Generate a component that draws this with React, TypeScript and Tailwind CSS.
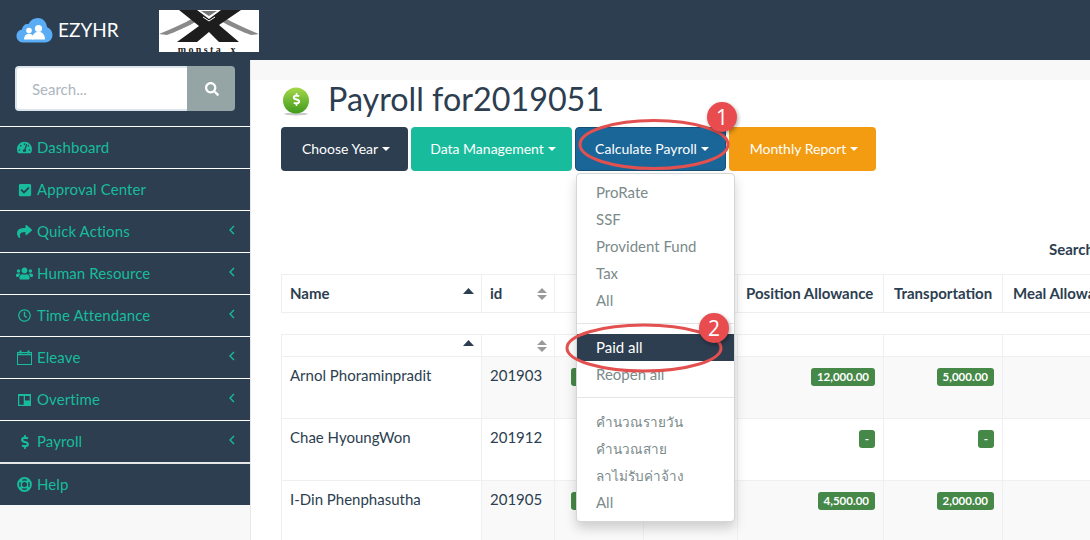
import type { ReactNode } from "react";
import {
  FaCheckSquare,
  FaDollarSign,
  FaRegClock,
  FaSearch,
  FaShare,
  FaTachometerAlt,
  FaUsers,
} from "react-icons/fa";

function OvertimeIcon() {
  return (
    <svg width="13" height="12" viewBox="0 0 13 12" fill="currentColor">
      <path d="M0 0h13v12H0zM1.3 2v8.7h4.4V2zM7 2v4.4h4.7V2z" fillRule="evenodd" />
    </svg>
  );
}

function CalendarIcon() {
  return (
    <svg width="15" height="15" viewBox="0 0 15 15" fill="none" stroke="currentColor">
      <rect x="0.5" y="2.5" width="14" height="12" />
      <path d="M0.5 4.5h14" strokeWidth="1.5" />
      <path d="M3.5 0.5v3M11.5 0.5v3" strokeWidth="2" />
    </svg>
  );
}

function RingIcon() {
  return (
    <svg width="15" height="15" viewBox="0 0 15 15" fill="none" stroke="currentColor">
      <circle cx="7.5" cy="7.5" r="6.4" strokeWidth="2" />
      <circle cx="7.5" cy="7.5" r="3.2" strokeWidth="1.4" />
      <path d="M3 3l2.4 2.4M12 3L9.6 5.4M3 12l2.4-2.4M12 12L9.6 9.6" strokeWidth="2.6" />
    </svg>
  );
}

function Chevron() {
  return (
    <svg width="6" height="10" viewBox="0 0 6 10" fill="none" stroke="currentColor" strokeWidth="1.4">
      <path d="M5 1L1 5l4 4" />
    </svg>
  );
}

const menu: { label: string; icon: ReactNode; arrow?: boolean }[] = [
  { label: "Dashboard", icon: <FaTachometerAlt size={15} /> },
  { label: "Approval Center", icon: <FaCheckSquare size={14} /> },
  { label: "Quick Actions", icon: <FaShare size={15} />, arrow: true },
  { label: "Human Resource", icon: <FaUsers size={17} />, arrow: true },
  { label: "Time Attendance", icon: <FaRegClock size={13} />, arrow: true },
  { label: "Eleave", icon: <CalendarIcon />, arrow: true },
  { label: "Overtime", icon: <OvertimeIcon />, arrow: true },
  { label: "Payroll", icon: <FaDollarSign size={14} />, arrow: true },
];

function CloudLogo() {
  return (
    <svg width="37" height="26" viewBox="0 0 37 26">
      <path
        d="M7 25.5C3 25.5 0.5 22.5 0.5 19C0.5 15.5 3 13 6 12.6C6.5 8.5 9.5 6.5 12.5 7C14.5 3 18 0.8 22 1C27 1.2 30.5 5 31 10C34.5 11.5 36.5 14.5 36.5 18C36.5 22.5 33 25.5 29 25.5Z"
        fill="#5aacf5"
      />
      <circle cx="13" cy="13.5" r="2.8" fill="#fff" />
      <path d="M8 22.5c0-3.5 2-5.8 5-5.8s4 1.5 4 3v2.8z" fill="#fff" />
      <circle cx="22.5" cy="11.5" r="3.6" fill="#fff" />
      <path d="M16 22.5c0-5 2.8-7.8 6.5-7.8s6.5 2.8 6.5 7.8z" fill="#fff" />
    </svg>
  );
}

function BrandImage() {
  return (
    <div className="relative ml-[40px] mt-[10px] h-[42px] w-[100px] overflow-hidden bg-white">
      <svg width="100" height="34" viewBox="0 0 100 34" className="absolute left-0 top-0">
        <path d="M0 24C12 19 24 14 36 7L40 10C28 17 16 22 8 25Z" fill="#8a8a8a" />
        <path d="M100 24C88 19 76 14 64 7L60 10C72 17 84 22 92 25Z" fill="#8a8a8a" />
        <path d="M20 0H38L50 9L62 0H82L60 15L80 32H60L50 22L38 32H18L40 16Z" fill="#1d1d1d" />
        <path d="M42 1H58L50 6Z" fill="#777" />
        <path d="M44 7L50 11L56 7" stroke="#fff" fill="none" />
      </svg>
      <span className="absolute left-[19px] top-[34px] whitespace-nowrap font-['Liberation_Serif',serif] text-[10px] font-bold leading-[12px] tracking-[2.4px] text-[#222]">
        monsta_x
      </span>
    </div>
  );
}

function SortBoth() {
  return (
    <svg width="10" height="12" viewBox="0 0 10 12" fill="#9a9a9a" className="mr-[-1px]">
      <path d="M5 0l5 5H0zM5 12L0 7h10z" />
    </svg>
  );
}

function SortUp() {
  return (
    <svg width="11" height="6" viewBox="0 0 11 6" fill="#2c3e50" className="mr-[-1px]">
      <path d="M5.5 0L11 6H0z" />
    </svg>
  );
}

function Badge({ children }: { children: ReactNode }) {
  return (
    <span className="inline-block h-[18px] rounded-[3px] bg-[#468847] px-[6px] align-top text-[11.5px] font-bold leading-[18px] text-white">
      {children}
    </span>
  );
}

function Columns() {
  return (
    <colgroup>
      <col className="w-[200px]" />
      <col className="w-[73px]" />
      <col className="w-[89px]" />
      <col className="w-[94px]" />
      <col className="w-[146px]" />
      <col className="w-[119px]" />
      <col className="w-[160px]" />
    </colgroup>
  );
}

const rows = [
  { name: "Arnol Phoraminpradit", id: "201903", hasBadge: true, position: "12,000.00", transport: "5,000.00", striped: true },
  { name: "Chae HyoungWon", id: "201912", hasBadge: false, position: "-", transport: "-", striped: false },
  { name: "I-Din Phenphasutha", id: "201905", hasBadge: true, position: "4,500.00", transport: "2,000.00", striped: true },
];

const headCell = "border border-[#ecf0f1] px-[8px] text-left font-bold";

function PayrollTable() {
  return (
    <div className="w-[881px]">
      <table className="w-[881px] table-fixed border-collapse text-[15px] text-[#2c3e50]">
        <Columns />
        <thead>
          <tr className="h-[38px]">
            <th className={headCell}>
              <div className="flex items-center justify-between">
                Name
                <span className="mb-[5px]">
                  <SortUp />
                </span>
              </div>
            </th>
            <th className={headCell}>
              <div className="flex items-center justify-between">
                id
                <SortBoth />
              </div>
            </th>
            <th className={headCell} />
            <th className={headCell} />
            <th className={`${headCell} whitespace-nowrap`}>Position Allowance</th>
            <th className={`${headCell} whitespace-nowrap pl-[10px]`}>Transportation</th>
            <th className={`${headCell} whitespace-nowrap pl-[10px]`}>Meal Allowance</th>
          </tr>
        </thead>
      </table>
      <table className="mt-[21px] w-[881px] table-fixed border-collapse text-[15px] text-[#2c3e50]">
        <Columns />
        <tbody>
          <tr className="h-[22px]">
            <td className="border border-[#ecf0f1] px-[8px]">
              <div className="flex justify-end">
                <span className="mb-[5px]">
                  <SortUp />
                </span>
              </div>
            </td>
            <td className="border border-[#ecf0f1] px-[8px]">
              <div className="flex justify-end">
                <SortBoth />
              </div>
            </td>
            <td className="border border-[#ecf0f1]" />
            <td className="border border-[#ecf0f1]" />
            <td className="border border-[#ecf0f1]" />
            <td className="border border-[#ecf0f1]" />
            <td className="border border-[#ecf0f1]" />
          </tr>
          {rows.map((row) => {
            const bg = row.striped ? "bg-[#f9f9f9]" : "bg-white";
            const cell = `border border-[#ecf0f1] px-[8px] pt-[11px] align-top ${bg}`;
            return (
              <tr key={row.id} className="h-[62px]">
                <td className="border border-[#ecf0f1] bg-white px-[8px] pt-[8px] align-top leading-[21px]">{row.name}</td>
                <td className={`border border-[#ecf0f1] px-[8px] pt-[8px] align-top leading-[21px] ${bg}`}>{row.id}</td>
                <td className={`${cell} pl-[16px]`}>
                  {row.hasBadge ? <span className="block h-[18px] w-[40px] rounded-[3px] bg-[#468847]" /> : null}
                </td>
                <td className={cell} />
                <td className={`${cell} text-right`}>
                  <Badge>{row.position}</Badge>
                </td>
                <td className={`${cell} text-right`}>
                  <Badge>{row.transport}</Badge>
                </td>
                <td className={cell} />
              </tr>
            );
          })}
        </tbody>
      </table>
    </div>
  );
}

function Caret() {
  return <span className="ml-[4px] inline-block h-0 w-0 border-x-[4px] border-t-[4px] border-x-transparent border-t-current align-middle" />;
}

const btn = "flex h-[44px] items-center justify-center rounded-[4px] pb-[1px] pl-[3px] text-[14px] text-white";

function PayrollMenu() {
  const item = "h-[27px] whitespace-nowrap px-[19px] text-[15px] leading-[27px] text-[#7b8a8b]";
  const thai = "h-[27px] whitespace-nowrap px-[19px] pt-[1px] text-[13.5px] leading-[27px] text-[#7b8a8b]";
  return (
    <div className="absolute left-[325px] top-[113px] z-10 w-[159px] rounded-[4px] border border-[#d5d5d5] bg-white py-[5px] shadow-[0_6px_12px_rgba(0,0,0,0.175)]">
      <div className={item}>ProRate</div>
      <div className={item}>SSF</div>
      <div className={item}>Provident Fund</div>
      <div className={item}>Tax</div>
      <div className={item}>All</div>
      <div className="mb-[10px] mt-[9px] h-px bg-[#e5e5e5]" />
      <div className="h-[27px] bg-[#2c3e50] px-[19px] text-[15px] leading-[27px] text-white">Paid all</div>
      <div className={item}>Reopen all</div>
      <div className="mb-[10px] mt-[9px] h-px bg-[#e5e5e5]" />
      <div className={thai}>คำนวณรายวัน</div>
      <div className={thai}>คำนวณสาย</div>
      <div className={thai}>ลาไม่รับค่าจ้าง</div>
      <div className={item}>All</div>
    </div>
  );
}

function Annotation({ n, className }: { n: number; className: string }) {
  return (
    <div
      className={`absolute z-30 flex h-[30px] w-[30px] items-center justify-center rounded-full bg-[#e84c4f] font-['Open_Sans',sans-serif] text-[21px] leading-none text-white shadow-[1px_2px_4px_rgba(0,0,0,0.35)] ${className}`}
    >
      {n}
    </div>
  );
}

export default function App() {
  return (
    <div className="relative h-[540px] w-[1090px] overflow-hidden bg-[#f8f8f8] font-[Lato,'Noto_Sans',sans-serif] text-[#2c3e50]">
      <header className="flex h-[60px] bg-[#2c3e50]">
        <div className="ml-[16px] mt-[17px]">
          <CloudLogo />
        </div>
        <div className="ml-[5px] mt-[17px] text-[19px] leading-[26px] text-white">EZYHR</div>
        <BrandImage />
      </header>

      <div className="flex">
        <aside className="w-[250px] shrink-0">
          <div className="h-[67px] border-b border-white bg-[#2c3e50] px-[15px] pt-[6px]">
            <div className="flex h-[45px] w-[220px]">
              <div className="flex flex-1 items-center rounded-l-[4px] border-2 border-r-0 border-[#dce4ec] bg-white pl-[15px] pt-[2px] text-[15px] text-[#acb6c0]">
                Search...
              </div>
              <div className="flex w-[48px] items-center justify-center rounded-r-[4px] bg-[#95a5a6] pl-[1px] text-white">
                <FaSearch size={14} />
              </div>
            </div>
          </div>
          {menu.map((m, i) => (
            <div
              key={m.label}
              className={`flex items-center bg-[#2c3e50] pl-[16px] pr-[15px] text-[15px] tracking-[0.1px] text-[#18bc9c] ${
                i === menu.length - 1 ? "h-[43px] border-b-2 border-[#e7e7e7]" : "h-[42px] border-b border-white"
              }`}
            >
              <span className="flex w-[17px] justify-center">{m.icon}</span>
              <span className="ml-[4px] flex-1">{m.label}</span>
              {m.arrow ? (
                <span className="mb-[4px]">
                  <Chevron />
                </span>
              ) : null}
            </div>
          ))}
          <div className="flex h-[41px] items-center bg-[#2c3e50] pl-[16px] text-[15px] tracking-[0.1px] text-[#18bc9c]">
            <span className="flex w-[17px] justify-center">
              <RingIcon />
            </span>
            <span className="ml-[4px]">Help</span>
          </div>
        </aside>

        <main className="relative h-[480px] flex-1 overflow-hidden border-l border-[#e7e7e7] bg-white">
          <div className="h-[20px] bg-[#f8f8f8]" />
          <div className="pl-[30px]">
            <div className="flex h-[47px] items-center pb-[6px]">
              <svg width="30" height="30" viewBox="0 0 30 30">
                <defs>
                  <linearGradient id="coin" x1="0" y1="0" x2="0" y2="1">
                    <stop offset="0" stopColor="#a5d84a" />
                    <stop offset="1" stopColor="#3f9a1c" />
                  </linearGradient>
                </defs>
                <ellipse cx="15" cy="28" rx="12" ry="1.5" fill="#c9c9c9" />
                <circle cx="15" cy="14.5" r="13" fill="url(#coin)" />
                <FaDollarSign x="9" y="7" size={13} color="#fff" />
              </svg>
              <h1 className="mb-[2px] ml-[17px] text-[32.3px] font-normal leading-none tracking-normal">Payroll for2019051</h1>
            </div>
            <div className="flex gap-[3px]">
              <div className={`${btn} w-[127px] bg-[#2c3e50]`}>
                Choose Year
                <Caret />
              </div>
              <div className={`${btn} w-[161px] bg-[#18bc9c]`}>
                Data Management
                <Caret />
              </div>
              <div className={`${btn} w-[151px] border border-[#164f75] bg-[#1b6698]`}>
                Calculate Payroll
                <Caret />
              </div>
              <div className={`${btn} w-[147px] bg-[#f39c12]`}>
                Monthly Report
                <Caret />
              </div>
            </div>
            <div className="mt-[68px] h-[35px] whitespace-nowrap pl-[768px] text-[15px] font-bold leading-[20px]">Search:</div>
            <PayrollTable />
          </div>
          <PayrollMenu />
        </main>
      </div>

      <svg width="1090" height="540" className="pointer-events-none absolute left-0 top-0 z-20">
        <ellipse cx="654" cy="144.5" rx="74" ry="24" fill="none" stroke="#e2504f" strokeWidth="3" />
        <ellipse cx="644" cy="348" rx="77" ry="23" fill="none" stroke="#e2504f" strokeWidth="3" />
      </svg>
      <Annotation n={1} className="left-[707px] top-[102px]" />
      <Annotation n={2} className="left-[699px] top-[313px]" />
    </div>
  );
}
